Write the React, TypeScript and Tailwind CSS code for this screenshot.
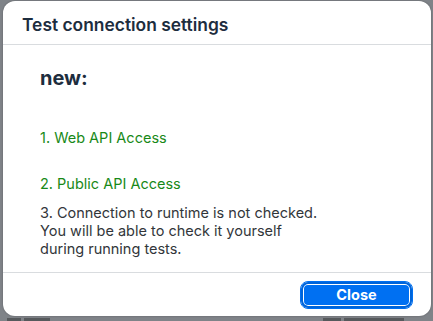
export default function App() {
  const notes = [
    '3. Connection to runtime is not checked.',
    'You will be able to check it yourself',
    'during running tests.',
  ];

  return (
    <div
      className="w-[433px] h-[321px] bg-[#7f8388] overflow-hidden flex flex-col pl-[3px] pt-[1px]"
      style={{ fontFamily: 'Inter, "Noto Sans", sans-serif' }}
    >
      <div className="w-[428px] h-[315px] bg-white rounded-[12px] flex flex-col shrink-0 shadow-[0_0_2px_rgba(0,0,0,0.3)]">
        <div className="h-[44px] border-b border-[#d9dcdf] flex items-center px-[19px] pt-[4px]">
          <h1 className="text-[17.4px] font-semibold text-[#1d2d3e] leading-none">
            Test connection settings
          </h1>
        </div>

        <div className="flex-1 px-[37px] pt-[21px] text-[14.5px]">
          <div className="text-[20px] font-bold text-[#1d2d3e] leading-[24px]">new:</div>
          <div className="mt-[39px] text-[#188918] leading-[18px]">1. Web API Access</div>
          <div className="mt-[28px] text-[#188918] leading-[18px]">2. Public API Access</div>
          <div className="mt-[11px] text-[#32363a] flex flex-col">
            {notes.map((line) => (
              <div key={line} className="h-[18px] leading-[18px]">
                {line}
              </div>
            ))}
          </div>
        </div>

        <div className="h-[44px] border-t border-[#d9dcdf] flex items-center justify-end pr-[19px]">
          <button className="w-[111px] h-[26px] rounded-[7px] bg-[#0070f2] border-2 border-[#0064d9] ring-1 ring-inset ring-white text-white text-[14.5px] font-bold flex items-center justify-center outline outline-1 outline-[#0070f2]">
            Close
          </button>
        </div>
      </div>
      <div className="flex items-end h-[5px] pl-[4px] gap-[3px]">
        <div className="w-[14px] h-[3px] bg-[#3a3d40] opacity-60" />
        <div className="w-[26px] h-[3px] bg-[#3a3d40] opacity-60" />
        <div className="w-[18px] h-[3px] bg-[#3a3d40] opacity-60 ml-[270px]" />
        <div className="w-[60px] h-[3px] bg-[#3a3d40] opacity-60" />
      </div>
    </div>
  );
}
